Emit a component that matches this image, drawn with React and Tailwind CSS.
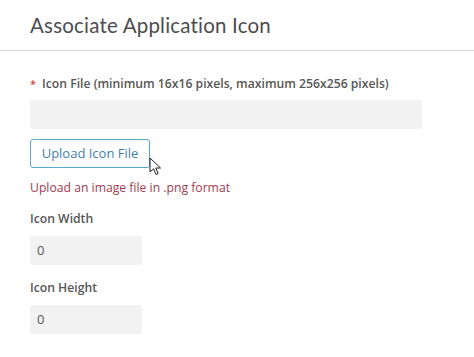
import React from 'react';

function Cursor() {
  return (
    <svg width="13" height="20" viewBox="0 0 13 20" className="absolute left-[149px] top-[157px]">
      <path d="M1 1 L1 15 L4.5 11.8 L7 17.5 L9.2 16.5 L6.8 11 L11.5 11 Z" fill="#fff" stroke="#222" strokeWidth="1" strokeLinejoin="round" />
    </svg>
  );
}

export default function App() {
  return (
    <div className="relative w-[474px] h-[357px] bg-white overflow-hidden" style={{ fontFamily: '"Open Sans", sans-serif' }}>
      {/* Header */}
      <header className="h-[51px] border-b border-[#d7d7d7] flex items-center pl-[30px]">
        <h1 className="text-[20.5px] text-[#4d4d4d] tracking-[0.2px]" style={{ fontFamily: 'Lato, sans-serif' }}>
          Associate Application Icon
        </h1>
      </header>

      <div className="pl-[30px] pt-[23px]">
        {/* Icon file */}
        <label className="flex items-center text-[12.2px] font-semibold text-[#565656] h-[20px]">
          <span className="text-[#c94a3a] text-[11px] mr-[6px]">*</span>
          Icon File (minimum 16x16 pixels, maximum 256x256 pixels)
        </label>
        <div className="mt-[6px] w-[392px] h-[29px] bg-[#f2f2f2] rounded-[2px]" />

        <button className="mt-[10px] w-[120px] h-[29px] border border-[#5aa6d0] rounded-[3px] text-[13px] text-[#3f7fae] bg-white">
          Upload Icon File
        </button>

        <p className="mt-[10px] text-[12.2px] text-[#9f3d4f] leading-[20px]">Upload an image file in .png format</p>

        {/* Width */}
        <label className="block mt-[11px] text-[12.2px] font-semibold text-[#565656] leading-[20px]">Icon Width</label>
        <div className="mt-[7px] w-[112px] h-[29px] bg-[#f2f2f2] rounded-[2px] flex items-center pl-[7px] text-[13px] text-[#565656]">0</div>

        {/* Height */}
        <label className="block mt-[13px] text-[12.2px] font-semibold text-[#565656] leading-[20px]">Icon Height</label>
        <div className="mt-[7px] w-[112px] h-[29px] bg-[#f2f2f2] rounded-[2px] flex items-center pl-[7px] text-[13px] text-[#565656]">0</div>
      </div>

      <Cursor />
    </div>
  );
}
